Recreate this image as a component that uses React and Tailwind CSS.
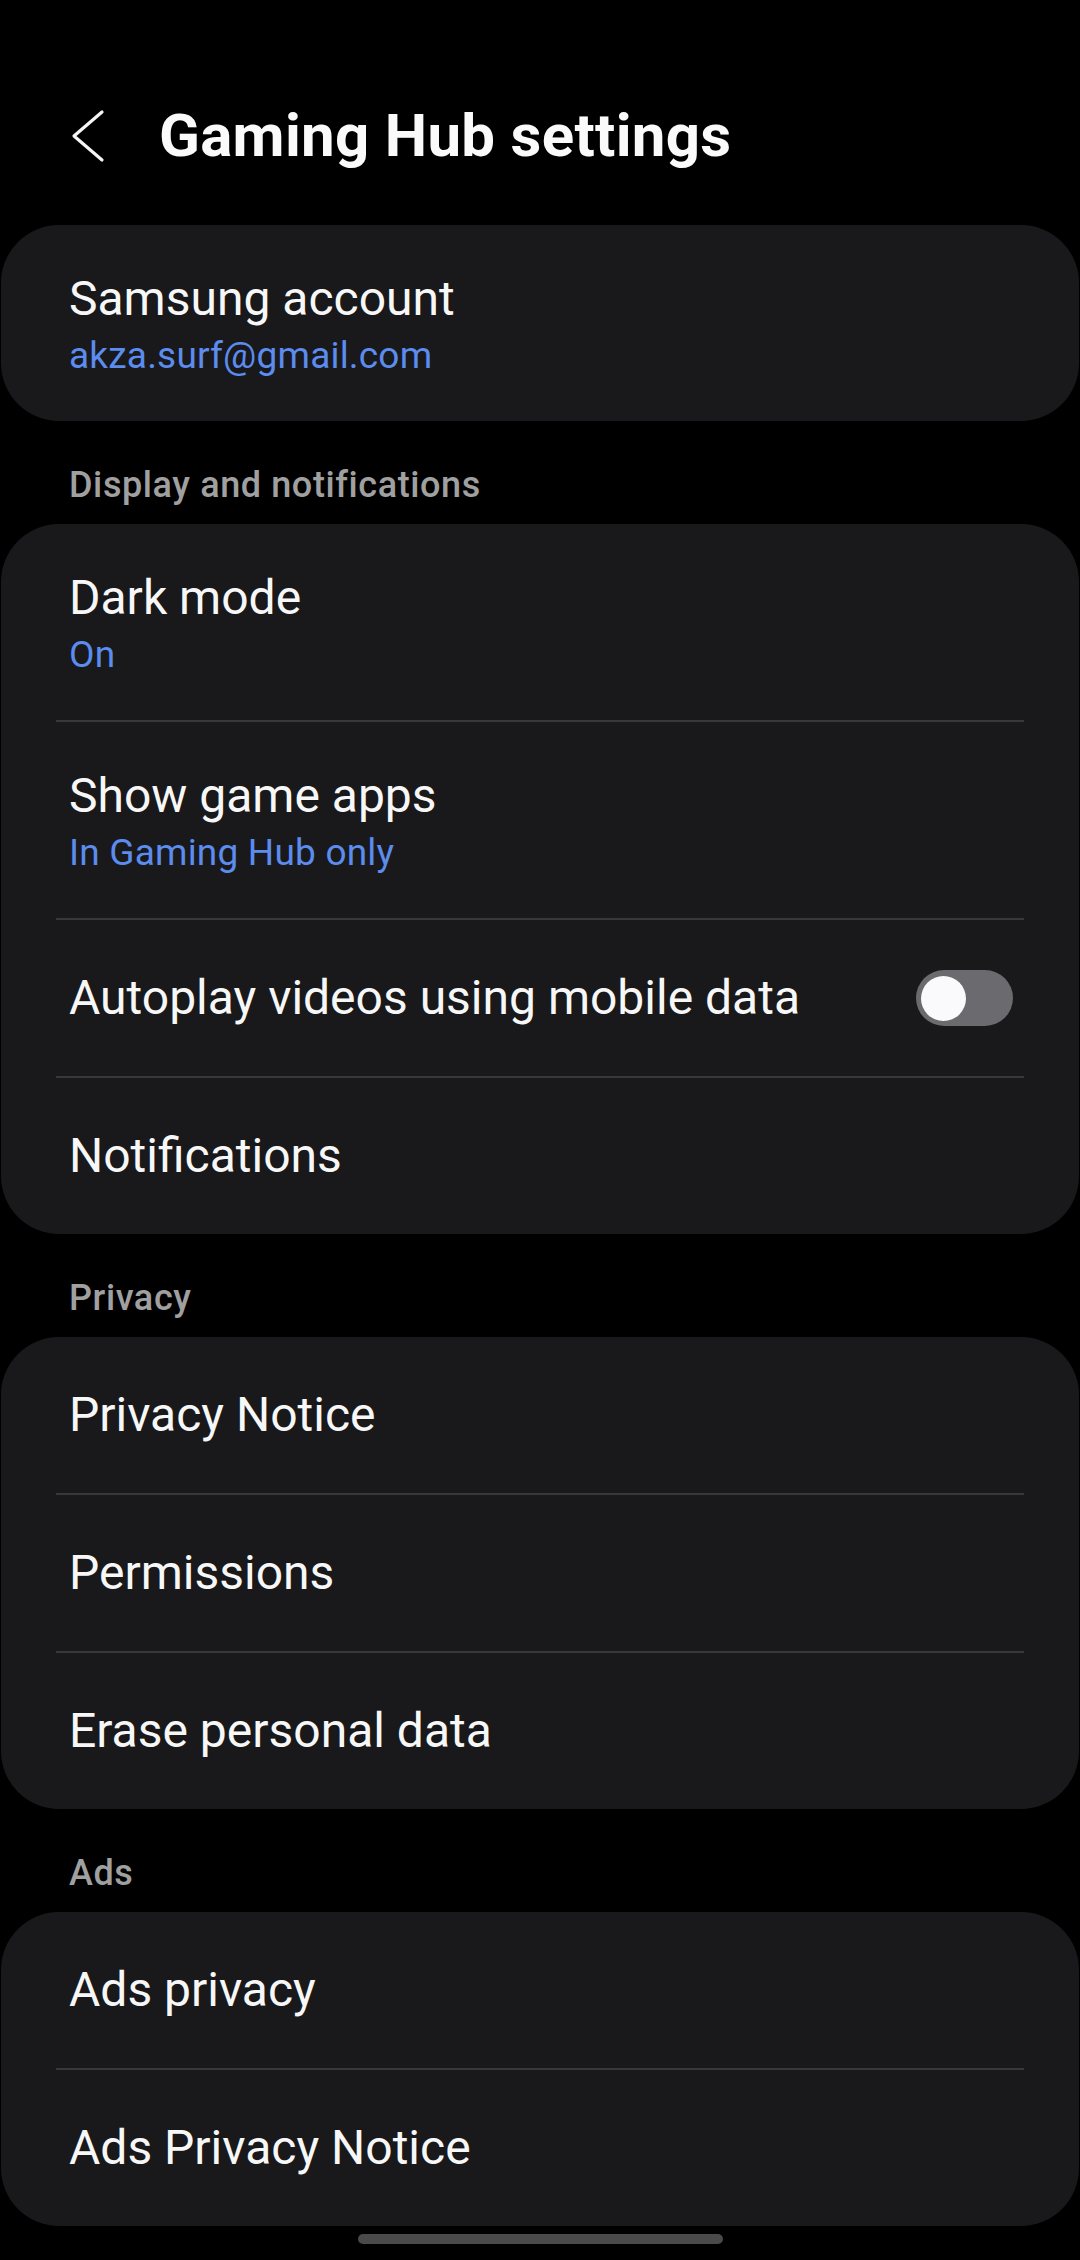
import React from 'react';

const font = { fontFamily: 'Roboto, "Noto Sans", sans-serif' };

function Row({ title, subtitle, right }) {
  if (subtitle) {
    return (
      <div className="flex h-[196px] flex-col px-[68px] pt-[46px]">
        <div className="text-[48px] leading-[56px] text-[#f7f7f7]">{title}</div>
        <div className="mt-[7px] text-[37px] leading-[44px] tracking-[0.2px] text-[#5b8cee]">{subtitle}</div>
      </div>
    );
  }
  return (
    <div className="flex h-[156px] items-center justify-between pl-[68px] pr-[66px]">
      <div className="text-[48px] leading-[56px] text-[#f7f7f7]">{title}</div>
      {right}
    </div>
  );
}

function Divider() {
  return <div className="mx-[55px] h-[2px] bg-[#38383a]" />;
}

function Card({ items }) {
  return (
    <div className="mx-[1px] rounded-[58px] bg-[#19191b]">
      {items.map((item, i) => (
        <React.Fragment key={item.title}>
          {i > 0 && <Divider />}
          <Row {...item} />
        </React.Fragment>
      ))}
    </div>
  );
}

function SectionLabel({ children }) {
  return (
    <div className="h-[103px] px-[69px] pt-[42px] text-[36px] font-medium leading-[44px] tracking-[0.6px] text-[#a0a0a0]">
      {children}
    </div>
  );
}

function Toggle() {
  return (
    <div className="flex h-[56px] w-[97px] items-center rounded-full bg-[#6a6a6f] pl-[5px]">
      <div className="h-[45px] w-[45px] rounded-full bg-[#fafafc]" />
    </div>
  );
}

export default function App() {
  return (
    <div className="min-h-[2260px] w-[1080px] bg-black" style={font}>
      <div className="flex h-[225px] items-center pt-[46px]">
        <svg className="ml-[70px]" width="36" height="54" viewBox="0 0 36 54" fill="none">
          <polyline points="32,3 4,27 32,51" stroke="#f5f5f5" strokeWidth="3.2" strokeLinecap="round" strokeLinejoin="round" />
        </svg>
        <h1 className="ml-[53px] text-[60px] font-bold leading-[70px] tracking-[0.3px] text-[#fafafa]">Gaming Hub settings</h1>
      </div>

      <Card items={[{ title: 'Samsung account', subtitle: 'akza.surf@gmail.com' }]} />

      <SectionLabel>Display and notifications</SectionLabel>
      <Card
        items={[
          { title: 'Dark mode', subtitle: 'On' },
          { title: 'Show game apps', subtitle: 'In Gaming Hub only' },
          { title: 'Autoplay videos using mobile data', right: <Toggle /> },
          { title: 'Notifications' },
        ]}
      />

      <SectionLabel>Privacy</SectionLabel>
      <Card items={[{ title: 'Privacy Notice' }, { title: 'Permissions' }, { title: 'Erase personal data' }]} />

      <SectionLabel>Ads</SectionLabel>
      <Card items={[{ title: 'Ads privacy' }, { title: 'Ads Privacy Notice' }]} />

      <div className="mt-[8px] flex justify-center">
        <div className="h-[10px] w-[365px] rounded-full bg-[#4a4a4a]" />
      </div>
    </div>
  );
}
